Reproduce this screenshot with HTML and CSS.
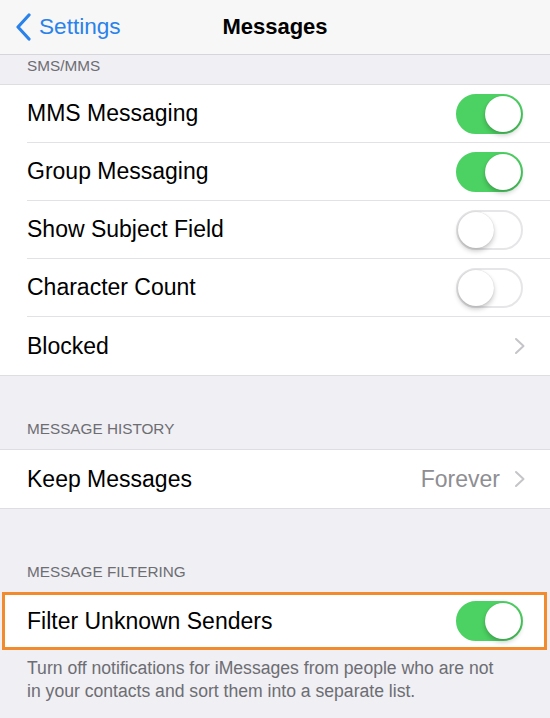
FILE: index.html
```html
<!DOCTYPE html>
<html>
<head>
<meta charset="utf-8">
<link rel="stylesheet" href="styles.css">
</head>
<body>
<div class="nav">
  <div class="back">
    <svg class="back-chev" width="18" height="28" viewBox="0 0 18 28"><path d="M14 2 L3 14 L14 26" fill="none" stroke="#2a82ea" stroke-width="3.2" stroke-linecap="round" stroke-linejoin="round"/></svg>
    <span class="back-label">Settings</span>
  </div>
  <div class="title">Messages</div>
</div>

<div class="header first">SMS/MMS</div>
<div class="group">
  <div class="row"><span class="label">MMS Messaging</span><span class="toggle on"><span class="knob"></span></span></div>
  <div class="row"><span class="label">Group Messaging</span><span class="toggle on"><span class="knob"></span></span></div>
  <div class="row"><span class="label">Show Subject Field</span><span class="toggle"><span class="knob"></span></span></div>
  <div class="row"><span class="label">Character Count</span><span class="toggle"><span class="knob"></span></span></div>
  <div class="row"><span class="label">Blocked</span><span class="chev"><svg width="12" height="18" viewBox="0 0 12 18"><path d="M2 2 L9.5 9 L2 16" fill="none" stroke="#c4c4c9" stroke-width="2" stroke-linecap="round" stroke-linejoin="round"/></svg></span></div>
</div>

<div class="header second">MESSAGE HISTORY</div>
<div class="group">
  <div class="row"><span class="label">Keep Messages</span><span class="value">Forever</span><span class="chev"><svg width="12" height="18" viewBox="0 0 12 18"><path d="M2 2 L9.5 9 L2 16" fill="none" stroke="#c4c4c9" stroke-width="2" stroke-linecap="round" stroke-linejoin="round"/></svg></span></div>
</div>

<div class="header third">MESSAGE FILTERING</div>
<div class="group highlight">
  <div class="row"><span class="label">Filter Unknown Senders</span><span class="toggle on"><span class="knob"></span></span></div>
</div>
<div class="footer">Turn off notifications for iMessages from people who are not in your contacts and sort them into a separate list.</div>
</body>
</html>
```
FILE: styles.css
```css
html, body {
  margin: 0;
  padding: 0;
}
body {
  background: #efeff4;
  font-family: "Liberation Sans", Arial, sans-serif;
  color: #000;
  width: 550px;
  height: 718px;
  overflow: hidden;
}
.nav {
  height: 54px;
  background: #f7f7f8;
  border-bottom: 1px solid #d6d6da;
  display: flex;
  align-items: center;
  position: relative;
}
.back {
  display: flex;
  align-items: center;
  padding-left: 15px;
  gap: 6px;
}
.back-chev {
  display: block;
}
.back-label {
  color: #2a82ea;
  font-size: 22.6px;
}
.title {
  position: absolute;
  left: 0;
  right: 0;
  top: 14px;
  text-align: center;
  font-weight: bold;
  font-size: 22px;
  pointer-events: none;
}
.header {
  color: #6d6d72;
  font-size: 15.3px;
  padding-left: 27px;
  box-sizing: border-box;
  display: flex;
  align-items: flex-end;
}
.header.first {
  height: 29px;
  padding-bottom: 9px;
}
.header.second {
  height: 73px;
  padding-bottom: 11px;
}
.header.third {
  height: 83px;
  padding-bottom: 11px;
}
.group {
  background: #fff;
  border-top: 1px solid #dedee2;
  border-bottom: 1px solid #dedee2;
}
.row {
  height: 58px;
  display: flex;
  align-items: center;
  margin-left: 27px;
  padding-right: 27px;
  font-size: 23px;
  border-bottom: 1px solid #e2e2e6;
  box-sizing: border-box;
}
.row:last-child {
  border-bottom: none;
}
.label {
  flex: 1;
}
.value {
  color: #8e8e93;
  margin-right: 14px;
}
.chev {
  display: flex;
  align-items: center;
  margin-right: -3px;
}
.toggle {
  width: 67px;
  height: 40px;
  border-radius: 20px;
  box-sizing: border-box;
  border: 2px solid #e6e6e9;
  background: #fff;
  position: relative;
  display: block;
}
.toggle .knob {
  position: absolute;
  top: 0;
  left: 0;
  width: 36px;
  height: 36px;
  border-radius: 50%;
  background: #fff;
  box-shadow: 0 3px 5px rgba(0,0,0,0.22), 0 0 1px rgba(0,0,0,0.2);
}
.toggle.on {
  background: #4cd262;
  border-color: #4cd262;
}
.toggle.on .knob {
  left: auto;
  right: 0;
}
.highlight {
  border: 3px solid #f28a2e;
  margin: 0 3px 0 2px;
}
.highlight .row {
  margin-left: 22px;
  padding-right: 21px;
  height: 52px;
}
.footer {
  color: #6d6d72;
  font-size: 17.6px;
  line-height: 23px;
  padding: 7px 45px 0 27px;
}
```
